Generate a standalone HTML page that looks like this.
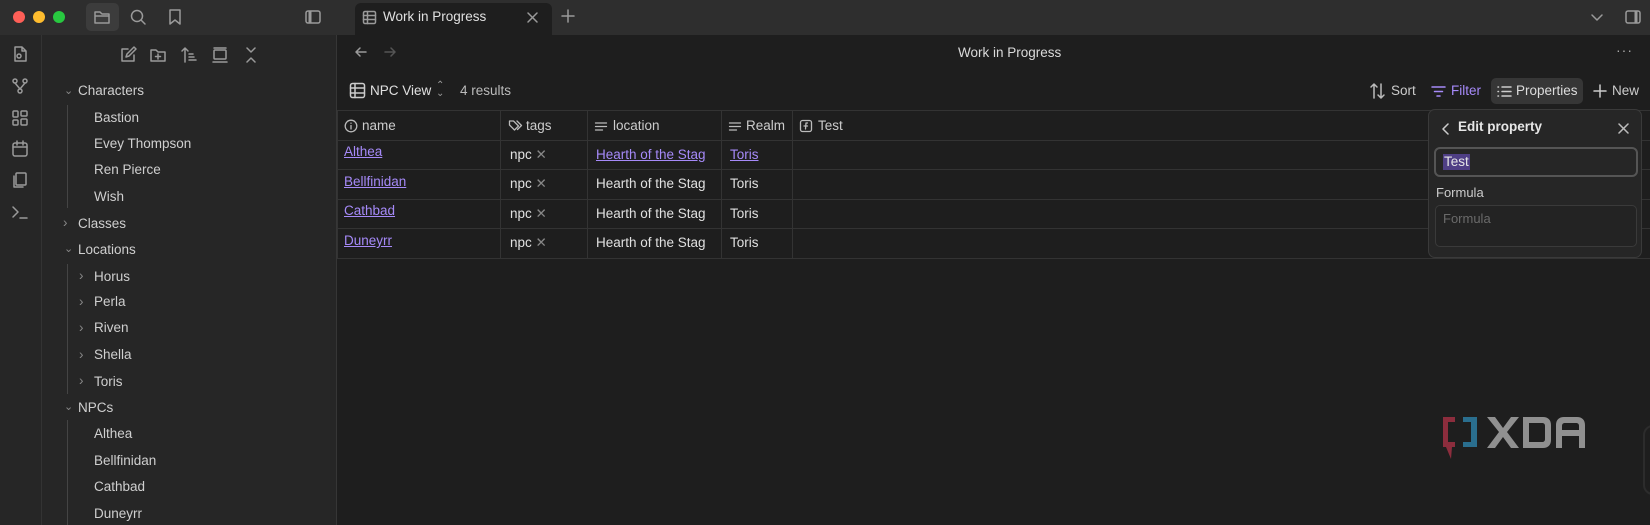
<!DOCTYPE html>
<html><head><meta charset="utf-8"><style>
*{box-sizing:border-box;margin:0;padding:0}
body{width:1650px;height:525px;overflow:hidden;background:#1e1e1e;font-family:"Liberation Sans",sans-serif;color:#dadada;font-size:14px;position:relative}
.abs{position:absolute}
svg{position:absolute;fill:none;stroke:#9a9a9a;stroke-width:1.5;stroke-linecap:round;stroke-linejoin:round}
.tb{left:0;top:0;width:1650px;height:35px;background:#2e2e2e}
.rib{left:0;top:35px;width:42px;height:490px;background:#262626;border-right:1px solid #333}
.side{left:42px;top:35px;width:295px;height:490px;background:#262626;border-right:1px solid #363636}
.ti{position:absolute;font-size:13.5px;color:#cfcfcf;line-height:20px}
.gl{position:absolute;width:1px;background:#444}
.cell{position:absolute;font-size:13.5px;line-height:20px}
.lnk{color:#a68af9;text-decoration:underline}
.hl{position:absolute;height:1px;background:#333;left:337px;width:1313px}
.vl{position:absolute;width:1px;background:#333;top:110px;height:148px}
</style></head><body>
<div class="abs tb"></div>
<div class="abs" style="left:13px;top:11px;width:12px;height:12px;border-radius:6px;background:#fe5f57"></div>
<div class="abs" style="left:33px;top:11px;width:12px;height:12px;border-radius:6px;background:#febc2e"></div>
<div class="abs" style="left:53px;top:11px;width:12px;height:12px;border-radius:6px;background:#28c840"></div>
<div class="abs" style="left:86px;top:3px;width:33px;height:28px;border-radius:5px;background:#3c3c3c"></div>
<svg style="left:93px;top:8px" width="18" height="18" viewBox="0 0 18 18"><path d="M2 4h5l2 2h7v9H2z M2 8h14"/></svg>
<svg style="left:129px;top:8px" width="18" height="18" viewBox="0 0 18 18"><circle cx="8" cy="8" r="5.5"/><path d="M12 12l4 4"/></svg>
<svg style="left:166px;top:8px" width="18" height="18" viewBox="0 0 18 18"><path d="M4 2h10v14l-5-4-5 4z"/></svg>
<svg style="left:304px;top:8px" width="18" height="18" viewBox="0 0 18 18"><rect x="2" y="3" width="14" height="12" rx="2"/><path d="M6 4v10" stroke-width="3"/></svg>
<div class="abs" style="left:355px;top:3px;width:197px;height:33px;background:#1e1e1e;border-radius:6px 6px 0 0"></div>
<svg style="left:362px;top:10px" width="15" height="15" viewBox="0 0 15 15"><rect x="1.5" y="1.5" width="12" height="12" rx="1.5"/><path d="M1.5 5.5h12M1.5 9.5h12M5.5 1.5v12"/></svg>
<div class="abs" style="left:383px;top:9px;font-size:13.5px;color:#e0e0e0">Work in Progress</div>
<svg style="left:526px;top:11px" width="13" height="13" viewBox="0 0 13 13"><path d="M2 2l9 9M11 2l-9 9"/></svg>
<svg style="left:560px;top:8px" width="16" height="16" viewBox="0 0 16 16"><path d="M8 2v12M2 8h12"/></svg>
<svg style="left:1590px;top:10px" width="14" height="14" viewBox="0 0 14 14"><path d="M2 5l5 5 5-5"/></svg>
<svg style="left:1624px;top:8px" width="18" height="18" viewBox="0 0 18 18"><rect x="2" y="3" width="14" height="12" rx="2"/><path d="M12 4v10" stroke-width="3"/></svg>

<div class="abs rib"></div>
<svg style="left:11px;top:45px" width="18" height="18" viewBox="0 0 18 18"><path d="M4 2h7l4 4v10H4z M11 2v4h4"/><circle cx="8" cy="11" r="2"/></svg>
<svg style="left:11px;top:77px" width="18" height="18" viewBox="0 0 18 18"><circle cx="4" cy="4" r="2"/><circle cx="14" cy="4" r="2"/><circle cx="9" cy="14" r="2"/><path d="M4 6l5 6M14 6l-5 6"/></svg>
<svg style="left:11px;top:109px" width="18" height="18" viewBox="0 0 18 18"><rect x="2" y="2" width="5" height="6" rx="1"/><rect x="10" y="2" width="6" height="5" rx="1"/><rect x="2" y="11" width="5" height="5" rx="1"/><rect x="10" y="10" width="6" height="6" rx="1"/></svg>
<svg style="left:11px;top:140px" width="18" height="18" viewBox="0 0 18 18"><rect x="2" y="3" width="14" height="13" rx="2"/><path d="M2 7h14M6 1v4M12 1v4"/></svg>
<svg style="left:11px;top:171px" width="18" height="18" viewBox="0 0 18 18"><rect x="5" y="2" width="10" height="12" rx="1"/><path d="M3 5v11h9"/></svg>
<svg style="left:11px;top:203px" width="18" height="18" viewBox="0 0 18 18"><path d="M2 4l5 5-5 5M9 15h7"/></svg>

<div class="abs side"></div>
<svg style="left:119px;top:46px" width="18" height="18" viewBox="0 0 18 18"><path d="M9 3H3v12h12V9 M7 11l1-3 7-7 2 2-7 7z"/></svg>
<svg style="left:149px;top:46px" width="18" height="18" viewBox="0 0 18 18"><path d="M2 4h5l2 2h7v9H2z M9 8v5M6.5 10.5h5"/></svg>
<svg style="left:180px;top:46px" width="18" height="18" viewBox="0 0 18 18"><path d="M5 16V2M2 5l3-3 3 3M9 8h4M9 11h5M9 14h7"/></svg>
<svg style="left:211px;top:46px" width="18" height="18" viewBox="0 0 18 18"><rect x="3" y="4" width="12" height="9" rx="1"/><path d="M2 16h14M3 2h12"/></svg>
<svg style="left:242px;top:46px" width="18" height="18" viewBox="0 0 18 18"><path d="M5 2l4 4 4-4M5 16l4-4 4 4"/></svg>

<div class="gl" style="left:67px;top:105px;height:103px"></div>
<div class="gl" style="left:67px;top:264px;height:130px"></div>
<div class="gl" style="left:67px;top:420px;height:105px"></div>
<div class="ti" style="left:64px;top:81px;color:#888;font-size:11px">⌄</div>
<div class="ti" style="left:78px;top:81px">Characters</div>
<div class="ti" style="left:94px;top:108px">Bastion</div>
<div class="ti" style="left:94px;top:134px">Evey Thompson</div>
<div class="ti" style="left:94px;top:160px">Ren Pierce</div>
<div class="ti" style="left:94px;top:187px">Wish</div>
<div class="ti" style="left:63px;top:213px;color:#888">›</div>
<div class="ti" style="left:78px;top:214px">Classes</div>
<div class="ti" style="left:64px;top:239px;color:#888;font-size:11px">⌄</div>
<div class="ti" style="left:78px;top:240px">Locations</div>
<div class="ti" style="left:79px;top:266px;color:#888">›</div><div class="ti" style="left:94px;top:267px">Horus</div>
<div class="ti" style="left:79px;top:292px;color:#888">›</div><div class="ti" style="left:94px;top:292px">Perla</div>
<div class="ti" style="left:79px;top:318px;color:#888">›</div><div class="ti" style="left:94px;top:318px">Riven</div>
<div class="ti" style="left:79px;top:345px;color:#888">›</div><div class="ti" style="left:94px;top:345px">Shella</div>
<div class="ti" style="left:79px;top:371px;color:#888">›</div><div class="ti" style="left:94px;top:372px">Toris</div>
<div class="ti" style="left:64px;top:397px;color:#888;font-size:11px">⌄</div>
<div class="ti" style="left:78px;top:398px">NPCs</div>
<div class="ti" style="left:94px;top:424px">Althea</div>
<div class="ti" style="left:94px;top:451px">Bellfinidan</div>
<div class="ti" style="left:94px;top:477px">Cathbad</div>
<div class="ti" style="left:94px;top:504px">Duneyrr</div>

<!-- main -->
<svg style="left:353px;top:44px" width="16" height="16" viewBox="0 0 16 16"><path d="M13 8H3M7 4L3 8l4 4"/></svg>
<svg style="left:382px;top:44px;stroke:#555" width="16" height="16" viewBox="0 0 16 16"><path d="M3 8h10M9 4l4 4-4 4"/></svg>
<div class="abs" style="left:958px;top:45px;font-size:13.5px;color:#dadada">Work in Progress</div>
<div class="abs" style="left:1616px;top:42px;font-size:14px;color:#aaa;letter-spacing:1px">···</div>

<svg style="left:349px;top:82px;stroke:#ccc" width="17" height="17" viewBox="0 0 17 17"><rect x="1.5" y="1.5" width="14" height="14" rx="2"/><path d="M1.5 6h14M1.5 11h14M6 1.5v14"/></svg>
<div class="abs" style="left:370px;top:83px;font-size:13.5px;color:#e0e0e0">NPC View</div>
<div class="abs" style="left:436px;top:82px;font-size:10px;color:#999;line-height:8px">⌃<br>⌄</div>
<div class="abs" style="left:460px;top:83px;font-size:13.5px;color:#bbb">4 results</div>

<svg style="left:1369px;top:82px;stroke:#bbb" width="18" height="18" viewBox="0 0 18 18"><path d="M5 16V2M2 5l3-3 3 3M12 2v14M9 13l3 3 3-3"/></svg>
<div class="abs" style="left:1391px;top:83px;font-size:13.5px;color:#ccc">Sort</div>
<svg style="left:1430px;top:83px;stroke:#a68af9" width="17" height="17" viewBox="0 0 17 17"><path d="M2 4h13M4.5 8.5h8M7 13h3"/></svg>
<div class="abs" style="left:1451px;top:83px;font-size:13.5px;color:#a68af9">Filter</div>
<div class="abs" style="left:1491px;top:78px;width:92px;height:26px;border-radius:5px;background:#363636"></div>
<svg style="left:1496px;top:83px;stroke:#ccc" width="17" height="17" viewBox="0 0 17 17"><path d="M2 4h.5M2 8.5h.5M2 13h.5M6 4h9M6 8.5h9M6 13h9"/></svg>
<div class="abs" style="left:1516px;top:83px;font-size:13.5px;color:#ddd">Properties</div>
<svg style="left:1592px;top:83px;stroke:#ccc" width="16" height="16" viewBox="0 0 16 16"><path d="M8 2v12M2 8h12"/></svg>
<div class="abs" style="left:1612px;top:83px;font-size:13.5px;color:#ccc">New</div>

<div class="hl" style="top:110px"></div>
<div class="hl" style="top:140px"></div>
<div class="hl" style="top:169px"></div>
<div class="hl" style="top:199px"></div>
<div class="hl" style="top:228px"></div>
<div class="hl" style="top:258px"></div>
<div class="vl" style="left:337px"></div>
<div class="vl" style="left:500px"></div>
<div class="vl" style="left:587px"></div>
<div class="vl" style="left:721px"></div>
<div class="vl" style="left:792px"></div>

<svg style="left:344px;top:119px;stroke:#bbb;stroke-width:1.3" width="14" height="14" viewBox="0 0 14 14"><circle cx="7" cy="7" r="5.8"/><path d="M7 6.5v3.5M7 4.2v.1"/></svg>
<div class="cell" style="left:362px;top:116px;color:#ccc">name</div>
<svg style="left:508px;top:119px;stroke:#bbb;stroke-width:1.3" width="15" height="14" viewBox="0 0 15 14"><path d="M1.5 2v4l5 5 4-4-5-5z M9 2l4.5 4.5-4 4"/></svg>
<div class="cell" style="left:526px;top:116px;color:#ccc">tags</div>
<svg style="left:594px;top:119px;stroke:#bbb;stroke-width:1.3" width="14" height="14" viewBox="0 0 14 14"><path d="M1.5 4h11M1.5 7.5h11M1.5 11h7"/></svg>
<div class="cell" style="left:613px;top:116px;color:#ccc">location</div>
<svg style="left:728px;top:119px;stroke:#bbb;stroke-width:1.3" width="14" height="14" viewBox="0 0 14 14"><path d="M1.5 4h11M1.5 7.5h11M1.5 11h7"/></svg>
<div class="cell" style="left:746px;top:116px;color:#ccc">Realm</div>
<svg style="left:799px;top:119px;stroke:#bbb;stroke-width:1.3" width="14" height="14" viewBox="0 0 14 14"><rect x="1.5" y="1.5" width="11" height="11" rx="2"/><path d="M8.5 4H7L6.5 10M5 7h3.5"/></svg>
<div class="cell" style="left:818px;top:116px;color:#ccc">Test</div>

<div class="cell lnk" style="left:344px;top:142px">Althea</div>
<div class="cell lnk" style="left:344px;top:172px">Bellfinidan</div>
<div class="cell lnk" style="left:344px;top:201px">Cathbad</div>
<div class="cell lnk" style="left:344px;top:231px">Duneyrr</div>
<div class="cell" style="left:510px;top:145px;color:#e0e0e0">npc <span style="color:#888">✕</span></div>
<div class="cell" style="left:510px;top:174px;color:#e0e0e0">npc <span style="color:#888">✕</span></div>
<div class="cell" style="left:510px;top:204px;color:#e0e0e0">npc <span style="color:#888">✕</span></div>
<div class="cell" style="left:510px;top:233px;color:#e0e0e0">npc <span style="color:#888">✕</span></div>
<div class="cell lnk" style="left:596px;top:145px">Hearth of the Stag</div>
<div class="cell" style="left:596px;top:174px;color:#e0e0e0">Hearth of the Stag</div>
<div class="cell" style="left:596px;top:204px;color:#e0e0e0">Hearth of the Stag</div>
<div class="cell" style="left:596px;top:233px;color:#e0e0e0">Hearth of the Stag</div>
<div class="cell lnk" style="left:730px;top:145px">Toris</div>
<div class="cell" style="left:730px;top:174px;color:#e0e0e0">Toris</div>
<div class="cell" style="left:730px;top:204px;color:#e0e0e0">Toris</div>
<div class="cell" style="left:730px;top:233px;color:#e0e0e0">Toris</div>

<!-- popup -->
<div class="abs" style="left:1428px;top:109px;width:214px;height:149px;background:#262626;border:1px solid #3a3a3a;border-radius:7px"></div>
<svg style="left:1440px;top:122px;stroke:#ccc" width="12" height="14" viewBox="0 0 12 14"><path d="M8 2L3 7l5 5"/></svg>
<div class="abs" style="left:1458px;top:119px;font-size:13.5px;color:#e6e6e6;font-weight:bold">Edit property</div>
<svg style="left:1617px;top:122px;stroke:#bbb" width="13" height="13" viewBox="0 0 13 13"><path d="M2 2l9 9M11 2l-9 9"/></svg>
<div class="abs" style="left:1434px;top:147px;width:204px;height:30px;background:#262626;border:2px solid #555;border-radius:6px"></div>
<div class="abs" style="left:1443px;top:154px;height:16px;padding:0 1px;background:#4f3f85;font-size:13.5px;color:#e6e6e6;line-height:16px">Test</div>
<div class="abs" style="left:1436px;top:185px;font-size:13px;color:#ccc">Formula</div>
<div class="abs" style="left:1435px;top:205px;width:202px;height:42px;background:#232323;border:1px solid #3a3a3a;border-radius:5px"></div>
<div class="abs" style="left:1443px;top:211px;font-size:13px;color:#6a6a6a">Formula</div>

<!-- XDA -->
<svg style="left:1442px;top:416px;stroke:none" width="150" height="46" viewBox="0 0 150 46">
<path d="M1 1h12v5H6v20h7v5H10l-1 12-5-12H1z" fill="#8c2d3d"/>
<path d="M21 1h14v30H21v-5h8V6h-8z" fill="#2a6e8e"/>
<path d="M45 1h8l8 11 8-11h8L65 16l12 16h-8l-8-11-8 11h-8l12-16z" fill="#909090"/>
<path d="M81 1h20c5 0 8 3 8 8v15c0 5-3 8-8 8H81zM87 7v19h13c2 0 3-1 3-3V10c0-2-1-3-3-3z" fill="#909090" fill-rule="evenodd"/>
<path d="M114 32V9c0-5 3-8 8-8h13c5 0 8 3 8 8v23h-6V20h-17v12zM120 14h17V10c0-2-1-3-3-3h-11c-2 0-3 1-3 3z" fill="#909090" fill-rule="evenodd"/>
</svg>
<div class="abs" style="left:1643px;top:425px;width:20px;height:70px;border-radius:10px;border:2px solid #2c2c2c"></div>
</body></html>
